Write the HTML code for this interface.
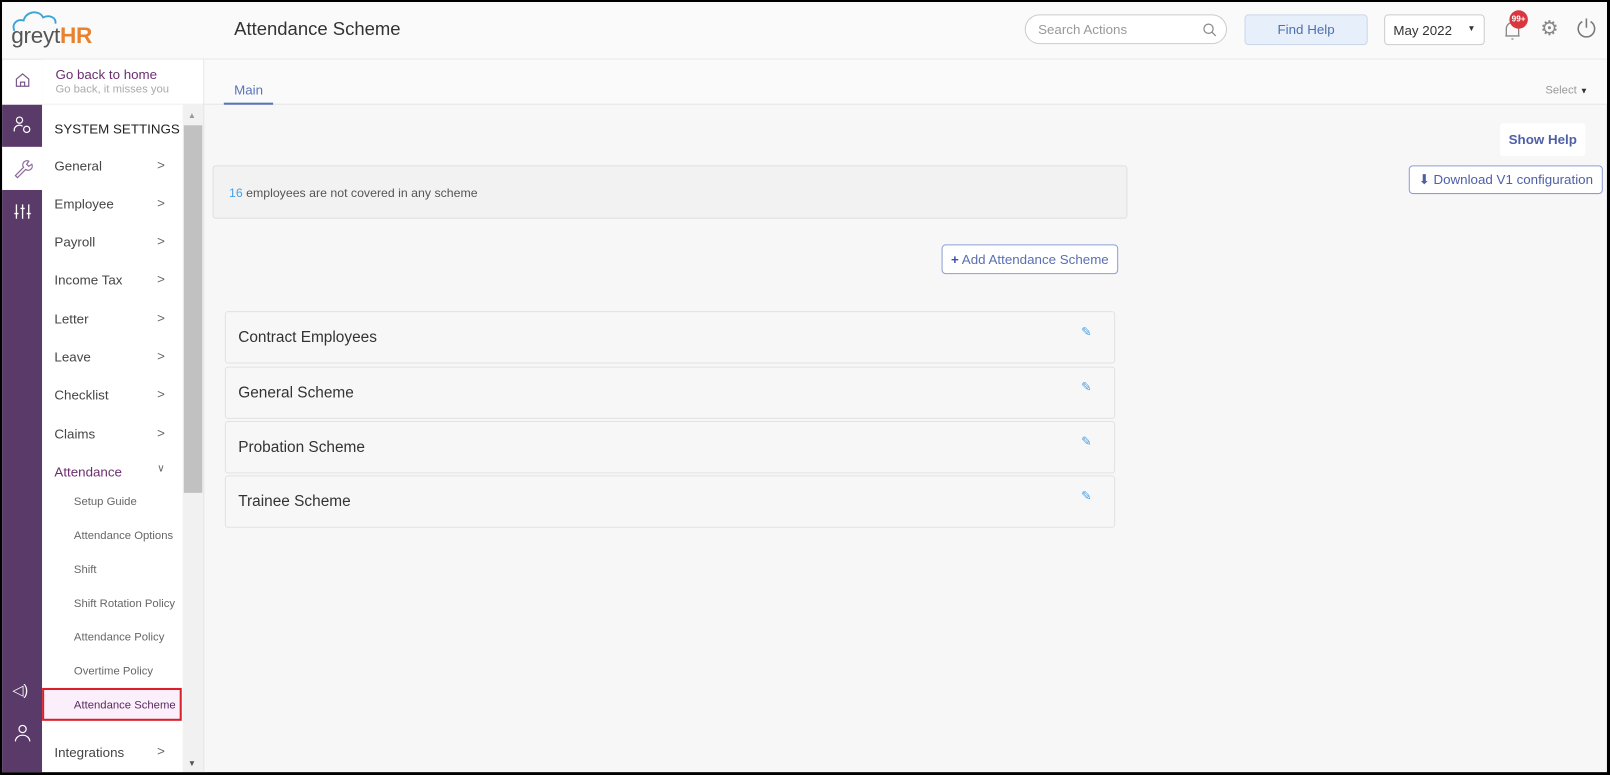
<!DOCTYPE html><html><head><style>
*{box-sizing:border-box;margin:0;padding:0}
body{width:1610px;height:775px;overflow:hidden;font-family:"Liberation Sans",sans-serif;background:#000;position:relative}
.wrap{position:absolute;left:0;top:0;width:1568px;height:755px;transform:scale(1.0268);transform-origin:0 0}
.frame{position:absolute;left:2px;top:2px;width:1563px;height:750px;background:#f7f7f7;overflow:hidden}
.a{position:absolute}
.hdr{left:0;top:0;width:1605px;height:56px;background:#fafafa;border-bottom:1px solid #e8e8e8}
.rail{left:0;top:56px;width:39px;height:700px;background:#5a3a68}
.wh{background:#fff}
.menu{left:39px;top:56px;width:137px;height:700px;background:#fff}
.mi{position:absolute;left:12px;font-size:13px;color:#444}
.chev{position:absolute;left:112px;font-size:13px;color:#666}
.sub{position:absolute;left:31px;font-size:11px;color:#666}
.card{position:absolute;left:217px;width:867px;height:51px;border:1px solid #e2e2e2;border-radius:3px;background:#f7f7f7;font-size:15px;color:#333;padding:16px 0 0 12px}
.pen{position:absolute;right:22px;top:12px;color:#4a9fe0;font-size:12px}
</style></head><body><div class="wrap"><div class="frame">
<div class="a hdr"></div>
<div class="a" style="left:9px;top:20px;font-size:22px;color:#555;letter-spacing:-0.3px">greyt<span style="color:#e8822f;font-weight:bold">HR</span></div>
<svg class="a" style="left:6px;top:4px" width="70" height="30"><path d="M6 24 C3 17 9 12 15 14 C17 5 30 3 34 11 C40 8 47 11 46 17" fill="none" stroke="#3aa3d8" stroke-width="1.8"/></svg>
<div class="a" style="left:226px;top:16px;font-size:18px;color:#333">Attendance Scheme</div>
<div class="a" style="left:996px;top:12px;width:197px;height:29px;border:1px solid #ccc;border-radius:15px;background:#fff;font-size:13px;color:#999;padding:6px 12px">Search Actions<svg style="position:absolute;right:9px;top:7px" width="14" height="14"><circle cx="6" cy="6" r="4.5" fill="none" stroke="#888" stroke-width="1.2"/><path d="M9.5 9.5 L13 13" stroke="#888" stroke-width="1.2"/></svg></div>
<div class="a" style="left:1210px;top:12px;width:120px;height:30px;border:1px solid #c9d6ea;border-radius:4px;background:#e7effb;font-size:13px;color:#4e6fb0;text-align:center;line-height:28px">Find Help</div>
<div class="a" style="left:1346px;top:12px;width:98px;height:30px;border:1px solid #ccc;border-radius:4px;background:#fff;font-size:13px;color:#333;padding:7px 8px">May 2022<span style="position:absolute;right:8px;top:8px;font-size:8px">&#9660;</span></div>
<svg class="a" style="left:1461px;top:15px" width="20" height="24"><path d="M4 18 V11 a6 6 0 0 1 12 0 V18 M17 18 H3 M9 21 h2" fill="none" stroke="#888" stroke-width="1.3"/></svg>
<div class="a" style="left:1468px;top:8px;width:18px;height:18px;border-radius:9px;background:#d9363e;color:#fff;font-size:8px;font-weight:bold;text-align:center;line-height:18px">99+</div>
<div class="a" style="left:1498px;top:13px;font-size:20px;color:#888">&#9881;</div>
<svg class="a" style="left:1532px;top:14px" width="22" height="24"><path d="M7 5 A8 8 0 1 0 15 5 M11 2 V11" fill="none" stroke="#777" stroke-width="1.5"/></svg>

<div class="a rail"></div>
<div class="a wh" style="left:0;top:56px;width:39px;height:44px"></div>
<div class="a wh" style="left:0;top:141px;width:39px;height:42px"></div>
<svg class="a" style="left:12px;top:68px" width="16" height="16"><path d="M2 7 L8 2 L14 7 V14 H2Z M6 14 V10 H10 V14" fill="none" stroke="#7a5a8a" stroke-width="1.2"/></svg>
<svg class="a" style="left:10px;top:110px" width="20" height="20"><circle cx="7" cy="5" r="3" fill="none" stroke="#fff" stroke-width="1.2"/><path d="M2 16 a5 5 0 0 1 8 -5" fill="none" stroke="#fff" stroke-width="1.2"/><circle cx="14" cy="14" r="3" fill="none" stroke="#fff" stroke-width="1.2"/></svg>
<svg class="a" style="left:10px;top:152px" width="20" height="20"><path d="M3 17 L11 9 a4 4 0 0 1 5 -6 l-2 3 2 2 3 -2 a4 4 0 0 1 -6 5 L5 19Z" fill="none" stroke="#8a6a9a" stroke-width="1.2"/></svg>
<svg class="a" style="left:10px;top:195px" width="20" height="18"><path d="M4 2 V16 M10 2 V16 M16 2 V16 M2 11 H6 M8 6 H12 M14 11 H18" stroke="#fff" stroke-width="1.3"/></svg>
<div class="a" style="left:10px;top:662px;color:#fff;font-size:14px">&#9665;)</div>
<svg class="a" style="left:11px;top:703px" width="18" height="18"><circle cx="9" cy="5" r="3.5" fill="none" stroke="#fff" stroke-width="1.2"/><path d="M2 17 a7 6 0 0 1 14 0" fill="none" stroke="#fff" stroke-width="1.2"/></svg>

<div class="a" style="left:39px;top:56px;width:158px;height:44px;background:#fff;border-bottom:1px solid #eee"></div>
<div class="a" style="left:52px;top:63px;font-size:13px;color:#6b2f6f">Go back to home</div>
<div class="a" style="left:52px;top:79px;font-size:11px;color:#aaa">Go back, it misses you</div>
<div class="a menu" style="top:100px;height:650px">
<div class="mi" style="top:16px;color:#222">SYSTEM SETTINGS</div>
<div class="mi" style="top:52px">General</div><div class="chev" style="top:51px">&gt;</div>
<div class="mi" style="top:89px">Employee</div><div class="chev" style="top:88px">&gt;</div>
<div class="mi" style="top:126px">Payroll</div><div class="chev" style="top:125px">&gt;</div>
<div class="mi" style="top:163px">Income Tax</div><div class="chev" style="top:162px">&gt;</div>
<div class="mi" style="top:201px">Letter</div><div class="chev" style="top:200px">&gt;</div>
<div class="mi" style="top:238px">Leave</div><div class="chev" style="top:237px">&gt;</div>
<div class="mi" style="top:275px">Checklist</div><div class="chev" style="top:274px">&gt;</div>
<div class="mi" style="top:313px">Claims</div><div class="chev" style="top:312px">&gt;</div>
<div class="mi" style="top:350px;color:#6b2f6f">Attendance</div><div class="chev" style="top:349px;font-size:10px">&#8744;</div>
<div class="sub" style="top:381px">Setup Guide</div>
<div class="sub" style="top:414px">Attendance Options</div>
<div class="sub" style="top:447px">Shift</div>
<div class="sub" style="top:480px">Shift Rotation Policy</div>
<div class="sub" style="top:513px">Attendance Policy</div>
<div class="sub" style="top:546px">Overtime Policy</div>
<div class="a" style="left:0;top:568px;width:136px;height:32px;background:#fbeffb;border:2px solid #d9202a"></div>
<div class="sub" style="top:579px;color:#5a2a60">Attendance Scheme</div>
<div class="mi" style="top:623px">Integrations</div><div class="chev" style="top:622px">&gt;</div>
</div>
<div class="a" style="left:176px;top:100px;width:20px;height:650px;background:#f1f1f1"></div>
<div class="a" style="left:177px;top:120px;width:18px;height:358px;background:#c1c1c1"></div>
<div class="a" style="left:181px;top:106px;font-size:8px;color:#999">&#9650;</div>
<div class="a" style="left:181px;top:737px;font-size:8px;color:#555">&#9660;</div>
<div class="a" style="left:196px;top:56px;width:1px;height:700px;background:#e4e4e4"></div>

<div class="a" style="left:197px;top:56px;width:1408px;height:44px;background:#fafafa;border-bottom:1px solid #e4e4e4"></div>
<div class="a" style="left:226px;top:78px;font-size:13px;color:#5a73b8">Main</div>
<div class="a" style="left:216px;top:98px;width:48px;height:2px;background:#5a73b8"></div>
<div class="a" style="left:1503px;top:80px;font-size:11px;color:#999">Select <span style="color:#333;font-size:8px">&#9660;</span></div>

<div class="a" style="left:1459px;top:118px;width:83px;height:32px;background:#fff;border-radius:3px;font-size:13px;color:#4e5fa8;text-align:center;line-height:32px;font-weight:bold">Show Help</div>
<div class="a" style="left:1370px;top:159px;width:189px;height:28px;background:#fff;border:1px solid #8e9ed4;border-radius:4px;font-size:13px;color:#4e5fa8;text-align:center;line-height:26px">&#11015; Download V1 configuration</div>

<div class="a" style="left:205px;top:159px;width:891px;height:52px;border:1px solid #e0e0e0;border-radius:3px;background:#f2f2f2;font-size:12px;color:#555;padding:19px 0 0 15px"><span style="color:#4a9fe0">16</span> employees are not covered in any scheme</div>
<div class="a" style="left:915px;top:236px;width:172px;height:29px;background:#fff;border:1px solid #8e9ed4;border-radius:4px;font-size:13px;color:#5a6fb0;text-align:center;line-height:27px"><b style="color:#3e4fa8">+</b> Add Attendance Scheme</div>

<div class="card" style="top:301px">Contract Employees<span class="pen">&#9998;</span></div>
<div class="card" style="top:355px">General Scheme<span class="pen">&#9998;</span></div>
<div class="card" style="top:408px">Probation Scheme<span class="pen">&#9998;</span></div>
<div class="card" style="top:461px">Trainee Scheme<span class="pen">&#9998;</span></div>
</div></div></body></html>
